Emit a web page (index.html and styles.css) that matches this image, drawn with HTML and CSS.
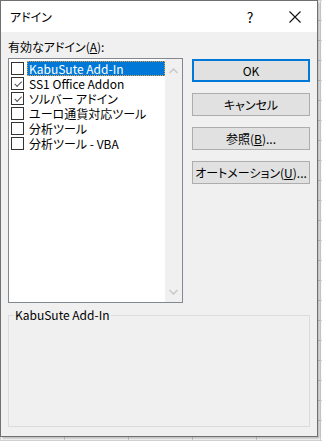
FILE: index.html
```html
<!DOCTYPE html>
<html lang="ja">
<head>
<meta charset="UTF-8">
<title>アドイン</title>
<link rel="stylesheet" href="styles.css">
</head>
<body>

<div class="dialog">
    <div class="titlebar">
        <span class="title">アドイン</span>
        <span class="help">?</span>
        <span class="close">
            <svg width="12" height="12" viewBox="0 0 12 12"><path d="M0.5 0.5 L11.5 11.5 M11.5 0.5 L0.5 11.5" stroke="#111" stroke-width="1.1" fill="none"/></svg>
        </span>
    </div>

    <div class="content">
        <div class="top">
            <div class="left">
                <div class="label">有効なアドイン(<u>A</u>):</div>
                <div class="listbox">
                    <div class="items">
                        <div class="item selected"><span class="box"></span><span class="name">KabuSute Add-In</span></div>
                        <div class="item"><span class="box checked"></span><span class="name">SS1 Office Addon</span></div>
                        <div class="item"><span class="box checked"></span><span class="name">ソルバー アドイン</span></div>
                        <div class="item"><span class="box"></span><span class="name">ユーロ通貨対応ツール</span></div>
                        <div class="item"><span class="box"></span><span class="name">分析ツール</span></div>
                        <div class="item"><span class="box"></span><span class="name">分析ツール - VBA</span></div>
                    </div>
                    <div class="scrollbar">
                        <svg width="9" height="6" viewBox="0 0 9 6"><path d="M0.5 5 L4.5 1 L8.5 5" stroke="#c8c8c8" stroke-width="1.5" fill="none"/></svg>
                        <svg width="9" height="6" viewBox="0 0 9 6"><path d="M0.5 1 L4.5 5 L8.5 1" stroke="#c8c8c8" stroke-width="1.5" fill="none"/></svg>
                    </div>
                </div>
            </div>
            <div class="buttons">
                <div class="btn default">OK</div>
                <div class="btn">キャンセル</div>
                <div class="btn">参照(<u>B</u>)...</div>
                <div class="btn">オートメーション(<u>U</u>)...</div>
            </div>
        </div>

        <div class="group">
            <span class="legend">KabuSute Add-In</span>
        </div>
    </div>
</div>

</body>
</html>
```

FILE: styles.css
```css
body {
    margin: 0;
    width: 322px;
    height: 441px;
    overflow: hidden;
    font-family: "Noto Sans CJK JP", "Noto Sans", sans-serif;
    font-feature-settings: "palt";
    font-size: 12px;
    color: #000000;
    background-color: #ffffff;
    background-image:
        linear-gradient(to right, #d4d4d4 1px, transparent 1px),
        linear-gradient(to bottom, #d4d4d4 1px, transparent 1px);
    background-size: 64px 20px;
    background-position: 0 0;
}
.dialog {
    width: 316px;
    height: 435px;
    border: 1px solid #707070;
    background: #f0f0f0;
    box-shadow: 2px 2px 2px rgba(0, 0, 0, 0.25);
    display: flex;
    flex-direction: column;
}
.titlebar {
    height: 31px;
    background: #ffffff;
    display: flex;
    align-items: center;
    padding-left: 9px;
}
.title {
    flex: 1;
    font-size: 12px;
}
.help {
    width: 30px;
    text-align: center;
    font-size: 14px;
    margin-right: 8px;
}
.close {
    width: 44px;
    display: flex;
    justify-content: center;
}
.content {
    padding: 6px 7px 0 7px;
    display: flex;
    flex-direction: column;
}
.top {
    display: flex;
    gap: 9px;
}
.left {
    width: 176px;
}
.label {
    height: 20px;
    line-height: 18px;
}
u {
    text-decoration: underline;
    text-underline-offset: 1px;
}
.listbox {
    height: 243px;
    border: 1px solid #828790;
    background: #ffffff;
    display: flex;
}
.items {
    flex: 1;
    padding: 2px 0 0 2px;
}
.item {
    height: 15px;
    display: flex;
    align-items: center;
    gap: 3px;
}
.box {
    width: 11px;
    height: 11px;
    border: 1px solid #333333;
    background: #ffffff;
    position: relative;
}
.box.checked::after {
    content: "";
    position: absolute;
    left: 2px;
    top: 1px;
    width: 6px;
    height: 3px;
    border-left: 1.3px solid #555555;
    border-bottom: 1.3px solid #555555;
    transform: rotate(-45deg) translate(-1px, 2px);
}
.name {
    height: 15px;
    line-height: 15px;
    padding: 0 2px;
    white-space: nowrap;
}
.item.selected .name {
    flex: 1;
    background: #0078d7;
    color: #ffffff;
    outline: 1px dotted #f0a040;
    outline-offset: -1px;
}
.scrollbar {
    width: 17px;
    background: #f0f0f0;
    display: flex;
    flex-direction: column;
    justify-content: space-between;
    align-items: center;
    padding: 9px 0 7px;
}
.buttons {
    display: flex;
    flex-direction: column;
    gap: 11px;
    padding-top: 21px;
}
.btn {
    width: 116px;
    height: 21px;
    line-height: 21px;
    border: 1px solid #adadad;
    background: #e1e1e1;
    text-align: center;
    white-space: nowrap;
}
.btn.default {
    border: 2px solid #0078d7;
    width: 114px;
    height: 19px;
    line-height: 19px;
}
.group {
    margin-top: 12px;
    height: 110px;
    border: 1px solid #dcdcdc;
    position: relative;
}
.legend {
    position: absolute;
    left: 5px;
    top: -9px;
    background: #f0f0f0;
    padding: 0 1px;
    line-height: 16px;
}
```
